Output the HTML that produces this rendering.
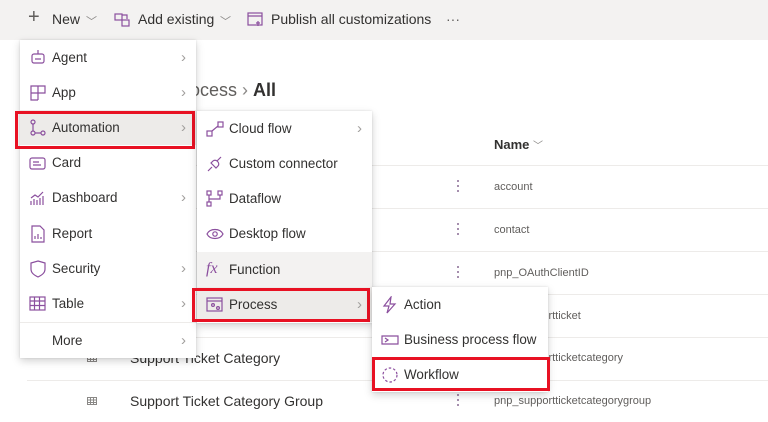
<!DOCTYPE html>
<html><head><style>
body{margin:0;width:768px;height:422px;overflow:hidden;background:#fff;font-family:"Liberation Sans",sans-serif;color:#323130;position:relative}
.a{position:absolute}
.tb{left:0;top:0;width:768px;height:40px;background:#f3f2f1}
.tb span{position:absolute;top:11px;font-size:14px;color:#323130}
.line{position:absolute;left:27px;width:741px;height:1px;background:#edebe9}
.t{position:absolute;font-size:11px;color:#605e5c}
.dots{position:absolute;left:457px;width:2px;font-size:0}
.dots i{display:block;width:2px;height:2px;background:#8a6c95;margin-bottom:3px;border-radius:1px}
.menu{position:absolute;background:#fff;box-shadow:0 3px 8px rgba(0,0,0,.18),0 0 2px rgba(0,0,0,.12)}
.it{position:absolute;left:0;right:0;height:35px;font-size:13.4px;line-height:36px}
.it .l{position:absolute;left:32px}
.it .ic{position:absolute;left:9px;top:9px;width:18px;height:18px}
.it .ch{position:absolute;right:10px;top:0;color:#a19f9d;font-size:15px}
.hl{background:#edebe9}
.red{position:absolute;border:3px solid #e81123;box-sizing:border-box}
svg{stroke:#8b4f9e;fill:none;stroke-width:1.2}
</style></head><body>
<div class="a tb">
<span style="left:28px;font-size:20px;top:6px;color:#605e5c;font-weight:300">+</span>
<span style="left:52px">New</span><span style="left:86px;color:#8a8886;font-size:11px;top:13px">﹀</span>
<svg class="a" style="left:114px;top:11px" width="17" height="17"><rect x="1" y="3" width="7" height="6"/><rect x="8" y="9" width="7" height="6"/><path d="M8 4h5v4"/></svg>
<span style="left:138px">Add existing</span><span style="left:220px;color:#8a8886;font-size:11px;top:13px">﹀</span>
<svg class="a" style="left:247px;top:11px" width="17" height="17"><rect x="1" y="2" width="14" height="12"/><path d="M1 5h14M11 10v5M9 12h4"/></svg>
<span style="left:271px">Publish all customizations</span>
<span style="left:446px;color:#605e5c">···</span>
</div>
<div class="a" style="left:190px;top:80px;font-size:18px;color:#605e5c">ocess <span style="color:#8a8886">›</span> <b style="color:#323130">All</b></div>
<div class="a" style="left:494px;top:137px;font-size:13px;font-weight:bold;color:#323130">Name <span style="font-weight:normal;color:#8a8886;font-size:10px">﹀</span></div>
<div class="line" style="top:165px"></div><div class="line" style="top:208px"></div><div class="line" style="top:251px"></div><div class="line" style="top:294px"></div><div class="line" style="top:337px"></div><div class="line" style="top:380px"></div>
<div class="t" style="left:494px;top:181px">account</div>
<div class="t" style="left:494px;top:224px">contact</div>
<div class="t" style="left:494px;top:267px">pnp_OAuthClientID</div>
<div class="t" style="left:494px;top:310px">pnp_supportticket</div>
<div class="t" style="left:494px;top:352px">pnp_supportticketcategory</div>
<div class="t" style="left:494px;top:395px">pnp_supportticketcategorygroup</div>
<div class="dots" style="top:180px"><i></i><i></i><i></i></div>
<div class="dots" style="top:223px"><i></i><i></i><i></i></div>
<div class="dots" style="top:266px"><i></i><i></i><i></i></div>
<div class="dots" style="top:394px"><i></i><i></i><i></i></div>
<div class="a" style="left:130px;top:350px;font-size:14px">Support Ticket Category</div>
<div class="a" style="left:130px;top:393px;font-size:14px">Support Ticket Category Group</div>
<svg class="a" style="left:87px;top:354px;stroke:#8a8886;stroke-width:1" width="10" height="8"><rect x=".5" y=".5" width="9" height="7"/><path d="M.5 3h9M.5 5.5h9M3.5 .5v7M6.5 .5v7"/></svg>
<svg class="a" style="left:87px;top:397px;stroke:#8a8886;stroke-width:1" width="10" height="8"><rect x=".5" y=".5" width="9" height="7"/><path d="M.5 3h9M.5 5.5h9M3.5 .5v7M6.5 .5v7"/></svg>

<div class="menu" style="left:20px;top:40px;width:176px;height:318px">
<div class="it" style="top:0"><svg class="ic"><rect x="3" y="5" width="12" height="9" rx="2"/><path d="M9 1v4M6 10h6"/></svg><span class="l">Agent</span><span class="ch">›</span></div>
<div class="it" style="top:35px"><svg class="ic"><path d="M2 2h14v7H2zM9 2v14M2 9v7h7"/></svg><span class="l">App</span><span class="ch">›</span></div>
<div class="it hl" style="top:70px"><svg class="ic"><circle cx="4" cy="3" r="2"/><circle cx="4" cy="14" r="2"/><circle cx="14" cy="14" r="2"/><path d="M4 5v7M6 14h6"/></svg><span class="l">Automation</span><span class="ch">›</span></div>
<div class="it" style="top:105px"><svg class="ic"><rect x="1" y="4" width="15" height="11" rx="2"/><path d="M4 8h6M4 11h8"/></svg><span class="l">Card</span></div>
<div class="it" style="top:140px"><svg class="ic"><path d="M2 16v-4M5 16v-6M8 16v-5M11 16v-7M14 16v-9M2 9l4-3 3 2 5-5"/></svg><span class="l">Dashboard</span><span class="ch">›</span></div>
<div class="it" style="top:176px"><svg class="ic"><path d="M3 1h8l4 4v12H3zM6 14v-3M9 14v-5M12 14v-2"/></svg><span class="l">Report</span></div>
<div class="it" style="top:211px"><svg class="ic"><path d="M9 1l7 2v6c0 4-3 6-7 8-4-2-7-4-7-8V3z"/></svg><span class="l">Security</span><span class="ch">›</span></div>
<div class="it" style="top:246px"><svg class="ic"><rect x="1" y="2" width="15" height="13"/><path d="M1 6h15M1 10.5h15M5.5 2v13M10.5 2v13"/></svg><span class="l">Table</span><span class="ch">›</span></div>
<div class="a" style="left:0;right:0;top:282px;height:1px;background:#edebe9"></div>
<div class="it" style="top:283px"><span class="l">More</span><span class="ch">›</span></div>
</div>
<div class="red" style="left:15px;top:111px;width:180px;height:38px"></div>

<div class="menu" style="left:197px;top:111px;width:175px;height:212px">
<div class="it" style="top:0"><svg class="ic"><rect x="1" y="11" width="5" height="5"/><rect x="12" y="2" width="5" height="5"/><path d="M6 11l6-5"/></svg><span class="l">Cloud flow</span><span class="ch">›</span></div>
<div class="it" style="top:35px"><svg class="ic"><path d="M2 16l4-4M11 6l4-4M5 8l5 5 2-2c1-1 1-3 0-4l-1-1c-1-1-3-1-4 0z"/></svg><span class="l">Custom connector</span></div>
<div class="it" style="top:70px"><svg class="ic"><rect x="1" y="1" width="4" height="4"/><rect x="12" y="1" width="4" height="4"/><rect x="1" y="12" width="4" height="4"/><path d="M3 5v7M14 5v4H3"/></svg><span class="l">Dataflow</span></div>
<div class="it" style="top:105px"><svg class="ic"><path d="M1 9c3-6 13-6 16 0-3 6-13 6-16 0z"/><circle cx="9" cy="9" r="2.2"/></svg><span class="l">Desktop flow</span></div>
<div class="it hl" style="top:141px;background:#f3f2f1"><span class="ic" style="color:#8b4f9e;font-style:italic;font-family:'Liberation Serif',serif;font-size:16px;line-height:16px;top:9px">fx</span><span class="l">Function</span></div>
<div class="it hl" style="top:176px"><svg class="ic"><rect x="1" y="2" width="15" height="13"/><path d="M1 5h15"/><circle cx="7" cy="9" r="1.4"/><circle cx="12" cy="12" r="1.4"/></svg><span class="l">Process</span><span class="ch">›</span></div>
</div>
<div class="red" style="left:192px;top:288px;width:178px;height:34px"></div>

<div class="menu" style="left:372px;top:287px;width:176px;height:105px">
<div class="it" style="top:0"><svg class="ic"><path d="M10 1L3 10h5l-2 7 8-9H9z"/></svg><span class="l">Action</span></div>
<div class="it" style="top:35px"><svg class="ic"><path d="M1 5h16v8H1zM4 7l3 2-3 2"/></svg><span class="l">Business process flow</span></div>
<div class="it" style="top:70px"><svg class="ic" style="stroke-dasharray:2.5 2"><circle cx="9" cy="9" r="7"/></svg><span class="l">Workflow</span></div>
</div>
<div class="red" style="left:372px;top:357px;width:178px;height:34px"></div>
</body></html>
